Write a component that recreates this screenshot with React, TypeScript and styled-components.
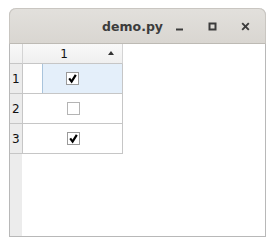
import React from 'react';
import styled, { createGlobalStyle } from 'styled-components';

const rows = [
  { id: 1, checked: true, selected: true },
  { id: 2, checked: false, selected: false },
  { id: 3, checked: true, selected: false },
];

export default function App() {
  return (
    <>
      <GlobalStyle />
      <Screen>
        <Window>
          <TitleBar>
            <span />
            <Title>demo.py</Title>
            <Controls>
              <WinButton aria-label="minimize">
                <svg width="9" height="9" viewBox="0 0 9 9">
                  <rect x="1" y="6.5" width="7" height="2" fill="#3c3c3c" />
                </svg>
              </WinButton>
              <WinButton aria-label="maximize">
                <svg width="9" height="9" viewBox="0 0 9 9">
                  <rect x="1.5" y="1.5" width="6" height="6" fill="none" stroke="#3c3c3c" strokeWidth="2" />
                </svg>
              </WinButton>
              <WinButton aria-label="close">
                <svg width="9" height="9" viewBox="0 0 9 9">
                  <path d="M1.2 1.2 L7.8 7.8 M7.8 1.2 L1.2 7.8" stroke="#3c3c3c" strokeWidth="1.9" />
                </svg>
              </WinButton>
            </Controls>
          </TitleBar>

          <Body>
            <Table>
              <Corner />
              <ColumnHeader>
                <HeaderLabel>1</HeaderLabel>
                <SortArrow />
              </ColumnHeader>
              {rows.map((r) => (
                <React.Fragment key={r.id}>
                  <RowHeader>{r.id}</RowHeader>
                  <Cell>
                    <CellFill $selected={r.selected}>
                      <CheckBox $checked={r.checked}>
                        {r.checked && (
                          <svg width="11" height="11" viewBox="0 0 11 11">
                            <path d="M2.2 5.4 L4.6 8.6 L8.8 1.8" fill="none" stroke="#000" strokeWidth="2.2" />
                          </svg>
                        )}
                      </CheckBox>
                    </CellFill>
                  </Cell>
                </React.Fragment>
              ))}
            </Table>
          </Body>
        </Window>
      </Screen>
    </>
  );
}

const GlobalStyle = createGlobalStyle`
  html, body {
    margin: 0;
    padding: 0;
    background: #ffffff;
  }
  * { box-sizing: border-box; }
`;

const Screen = styled.div`
  width: 276px;
  height: 247px;
  padding: 8px 10px 10px 9px;
  background: #ffffff;
`;

const Window = styled.div`
  width: 257px;
  height: 229px;
  display: flex;
  flex-direction: column;
  border: 1px solid #b8b8b8;
  border-top: none;
  border-radius: 7px 7px 0 0;
  background: #ffffff;
`;

const TitleBar = styled.div`
  height: 36px;
  margin: 0 -1px;
  display: grid;
  grid-template-columns: 1fr auto 1fr;
  align-items: center;
  background: linear-gradient(#e2e0dc, #d9d6d1);
  border: 1px solid #c9c6c1;
  border-bottom-color: #bdbab4;
  border-radius: 7px 7px 0 0;
`;

const Title = styled.span`
  font-family: 'DejaVu Sans', sans-serif;
  font-weight: bold;
  font-size: 12.5px;
  color: #3c3c3c;
  padding-top: 1px;
`;

const Controls = styled.div`
  display: flex;
  justify-content: flex-end;
  padding-right: 3px;
`;

const WinButton = styled.div`
  width: 33px;
  height: 34px;
  display: flex;
  align-items: center;
  justify-content: center;
`;

const Body = styled.div`
  flex: 1;
  background: linear-gradient(to right, #ececec 0, #ececec 12px, #ffffff 12px);
`;

const Table = styled.div`
  display: grid;
  grid-template-columns: 13px 100px;
  grid-template-rows: 20px repeat(3, 30px);
  font-family: 'DejaVu Sans', sans-serif;
  font-size: 12px;
  color: #111;
`;

const Corner = styled.div`
  background: linear-gradient(#f9f9f9, #efefef);
  border-right: 1px solid #d4d4d4;
  border-bottom: 1px solid #c6c6c6;
`;

const ColumnHeader = styled.div`
  display: flex;
  align-items: center;
  background: linear-gradient(#f9f9f9, #efefef);
  border-right: 1px solid #d4d4d4;
  border-bottom: 1px solid #c6c6c6;
`;

const HeaderLabel = styled.span`
  flex: 1;
  text-align: center;
  padding-left: 1px;
`;

const SortArrow = styled.span`
  width: 0;
  height: 0;
  margin: 0 8px 1px 4px;
  border-left: 3.5px solid transparent;
  border-right: 3.5px solid transparent;
  border-bottom: 4px solid #333;
`;

const RowHeader = styled.div`
  display: flex;
  align-items: center;
  padding-left: 2px;
  background: #ececec;
  border-right: 1px solid #c6c6c6;
  border-bottom: 1px solid #c6c6c6;
`;

const Cell = styled.div`
  display: flex;
  justify-content: flex-end;
  border-right: 1px solid #c6c6c6;
  border-bottom: 1px solid #c6c6c6;
`;

const CellFill = styled.div<{ $selected: boolean }>`
  width: ${(p) => (p.$selected ? '80px' : '100%')};
  display: flex;
  align-items: center;
  justify-content: ${(p) => (p.$selected ? 'flex-start' : 'center')};
  padding-left: ${(p) => (p.$selected ? '23px' : '1px')};
  background: ${(p) => (p.$selected ? '#e4effa' : 'transparent')};
  border-left: ${(p) => (p.$selected ? '1px solid #a9c4dc' : 'none')};
`;

const CheckBox = styled.span<{ $checked: boolean }>`
  width: 13px;
  height: 13px;
  display: flex;
  align-items: center;
  justify-content: center;
  background: #ffffff;
  border: 1px solid ${(p) => (p.$checked ? '#9a9a9a' : '#b4b4b4')};
`;
